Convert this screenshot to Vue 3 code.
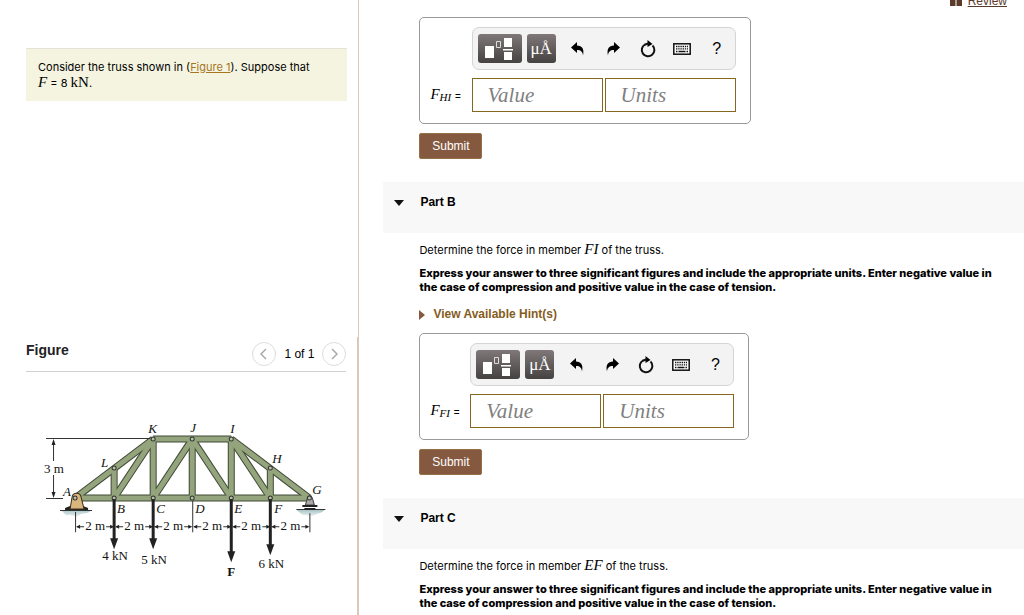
<script setup>
import { reactive } from 'vue'

const instructions =
  'Express your answer to three significant figures and include the appropriate units. Enter negative value in the case of compression and positive value in the case of tension.'

const parts = reactive([
  { id: 'a', member: 'HI', value: '', units: '', answer: true },
  { id: 'b', title: 'Part B', member: 'FI', value: '', units: '', answer: true, hints: true },
  { id: 'c', title: 'Part C', member: 'EF', value: '', units: '', answer: false }
])

// joint positions in the truss drawing
const joints = {
  A: [75, 498], B: [114, 498], C: [153, 498], D: [192, 498], E: [231, 498], F: [270, 498], G: [309, 498],
  L: [114, 468], K: [153, 439], J: [192, 439], I: [231, 439], H: [270, 468]
}
const members = ['LB', 'KC', 'JD', 'IE', 'HF', 'KB', 'JC', 'JE', 'IF', 'AG', 'AK', 'KI', 'IG'].map((m) => {
  const [x1, y1] = joints[m[0]]
  const [x2, y2] = joints[m[1]]
  return { id: m, x1, y1, x2, y2 }
})
const pins = Object.entries(joints).map(([id, [x, y]]) => ({ id, x, y }))
const jointLabels = [
  ['K', 148, 433], ['J', 190, 432], ['I', 230, 433], ['L', 101, 467], ['H', 272, 463], ['A', 63, 496],
  ['G', 312, 494], ['B', 117, 513], ['C', 156, 513], ['D', 195, 513], ['E', 234, 513], ['F', 274, 513]
]
const loads = [
  { x: 114, tip: 549, label: '4 kN', tx: 115, ty: 560 },
  { x: 153, tip: 549, label: '5 kN', tx: 154, ty: 564 },
  { x: 231, tip: 562, label: 'F', tx: 231, ty: 576, bold: true },
  { x: 270, tip: 555, label: '6 kN', tx: 271, ty: 568 }
]
const spans = [75, 114, 153, 192, 231, 270]
</script>

<template>
  <div class="page">
    <aside class="side">
      <section class="problem">
        Consider the truss shown in (<a href="#figure">Figure 1</a>). Suppose that<br />
        <i class="math">F</i> = 8 <span class="math">kN</span>.
      </section>

      <section id="figure" class="figure">
        <header class="figure-head">
          <h2>Figure</h2>
          <nav class="pager">
            <button type="button" aria-label="Previous figure">
              <svg width="12" height="12" viewBox="0 0 12 12"><path d="M8 1 3 6l5 5" /></svg>
            </button>
            <span>1 of 1</span>
            <button type="button" aria-label="Next figure">
              <svg width="12" height="12" viewBox="0 0 12 12"><path d="m4 1 5 5-5 5" /></svg>
            </button>
          </nav>
        </header>

        <svg class="truss" viewBox="26 415 320 170" role="img" aria-label="Truss with loads">
          <defs>
            <linearGradient id="ground" x1="0" y1="0" x2="0" y2="1">
              <stop offset="0" stop-color="#a9c4c6" />
              <stop offset="1" stop-color="#e8f0f0" />
            </linearGradient>
          </defs>

          <path d="M60 510h31c-3 5-8 2-12 5-4 3-7-1-11 0-4 1-3-3-8-5z" fill="url(#ground)" />
          <path d="M296 510h28c-3 4-7 3-10 5-4 2-7-1-10 0-4 0-4-3-8-5z" fill="url(#ground)" />
          <path class="thin" d="M60 510.500h32M296 509.500h29" />

          <g class="outline">
            <line v-for="m in members" :key="m.id" :x1="m.x1" :y1="m.y1" :x2="m.x2" :y2="m.y2" />
          </g>
          <g class="fill">
            <line v-for="m in members" :key="m.id" :x1="m.x1" :y1="m.y1" :x2="m.x2" :y2="m.y2" />
          </g>

          <!-- supports -->
          <path d="M65 510v-2l5-2h13l5 2v2z" fill="#222" />
          <path d="M70 509l2-12c1-5 8-5 9 0l3 12z" fill="#d9b67c" stroke="#3c3020" />
          <path d="M305 505l2-7c1-3 4-3 5 0l2 7z" fill="#aaa" stroke="#444" />
          <path d="M302 506h15M304 509h11" stroke="#222" stroke-width="2" />

          <g class="pin">
            <circle v-for="p in pins" :key="p.id" :cx="p.x" :cy="p.y" r="2" />
          </g>

          <!-- dimensions -->
          <path class="thin" d="M46 438.500h104M46 498.500h17M53.500 442v19M53.500 475v20M75.500 512v20M192.500 501v31M309.500 513v19" />
          <path class="arrow" d="M53.500 439l-2 6h4zM53.500 498l-2-6h4z" />
          <text class="dim" x="54" y="473">3 m</text>
          <g v-for="x in spans" :key="x">
            <path class="thin" :d="`M${x + 2} 526.500h7M${x + 31} 526.500h6`" />
            <path class="arrow" :d="`M${x + 1} 526.500l4-2v4zM${x + 39} 526.500l-4-2v4z`" />
            <text class="dim" :x="x + 20" y="530">2 m</text>
          </g>

          <g v-for="l in loads" :key="l.x">
            <path :d="`M${l.x} 499V${l.tip - 8}`" stroke="#222" stroke-width="3" />
            <path class="arrow" :d="`M${l.x} ${l.tip}l-4-11h8z`" />
            <text class="dim" :class="{ bold: l.bold }" :x="l.tx" :y="l.ty">{{ l.label }}</text>
          </g>
          <text v-for="[name, x, y] in jointLabels" :key="name" class="joint" :x="x" :y="y">{{ name }}</text>
        </svg>
      </section>
    </aside>

    <main class="work">
      <div class="topbar">
        <svg width="12" height="12" viewBox="0 0 12 12"><path d="M0 0h5.500v11H0zM6.500 0H12v11H6.500z" fill="#5b3a2b" /></svg>
        <a href="#review">Review</a>
      </div>

      <section v-for="p in parts" :key="p.id" class="part">
        <header v-if="p.title" class="part-head">
          <button type="button">
            <svg width="10" height="6" viewBox="0 0 10 6"><path d="M0 0h10L5 6z" fill="#111" /></svg>
            {{ p.title }}
          </button>
        </header>

        <div class="part-body">
          <template v-if="p.title">
            <p class="question">Determine the force in member <i class="math">{{ p.member }}</i> of the truss.</p>
            <p class="instructions">{{ instructions }}</p>
          </template>
          <button v-if="p.hints" type="button" class="hints">
            <svg width="6" height="10" viewBox="0 0 6 10"><path d="M0 0v10l6-5z" fill="#855a40" /></svg>
            View Available Hint(s)
          </button>

          <form v-if="p.answer" @submit.prevent>
            <div class="answer">
              <label :for="'value-' + p.id"><i class="math">F<sub>{{ p.member }}</sub></i> =</label>
              <div class="toolbar">
                <button type="button" class="dark wide" aria-label="Templates">
                  <svg width="30" height="24" viewBox="0 0 30 24">
                    <path d="M0 9h9v12H0zM19 1h8v9h-8zM19 15h8v8h-8zM18 12h10v1.500H18z" fill="#fff" />
                    <path d="M11.500 4.500h4v6h-4z" fill="none" stroke="#ddd" />
                  </svg>
                </button>
                <button type="button" class="dark units" aria-label="Symbols">μÅ</button>
                <button type="button" class="tool" aria-label="Undo">
                  <svg width="14" height="14" viewBox="0 0 14 14"><path d="M0 5.500 6 0v3.400c5 .2 7.500 3.200 6 10-.3-3.500-2-5.400-6-5.400v3z" /></svg>
                </button>
                <button type="button" class="tool" aria-label="Redo">
                  <svg width="14" height="14" viewBox="0 0 14 14"><path d="M14 5.500 8 0v3.400c-5 .2-7.500 3.200-6 10 .3-3.500 2-5.400 6-5.400v3z" /></svg>
                </button>
                <button type="button" class="tool" aria-label="Reset">
                  <svg width="16" height="18" viewBox="0 0 16 18">
                    <path d="M5 4.500A6.300 6.300 0 1 0 12.500 5.500" fill="none" stroke="#111" stroke-width="2" />
                    <path d="M7.500 0 12.500 4 7.500 7z" />
                    <path d="M4.500 4.800 9 3.300" stroke="#111" stroke-width="2" />
                  </svg>
                </button>
                <button type="button" class="tool" aria-label="Keyboard">
                  <svg width="18" height="12" viewBox="0 0 18 12">
                    <rect x=".8" y=".8" width="16.400" height="10.400" fill="#fff" stroke="#111" stroke-width="1.500" />
                    <path d="M3 3.500h12M3 5.800h12" stroke="#111" stroke-width="1.300" stroke-dasharray="1.400 .8" />
                    <path d="M3 8.500h1.500M5.500 8.500h7M13.500 8.500H15" stroke="#111" stroke-width="1.300" />
                  </svg>
                </button>
                <button type="button" class="tool help" aria-label="Help">?</button>
              </div>
              <div class="fields">
                <input :id="'value-' + p.id" v-model="p.value" type="text" placeholder="Value" />
                <input v-model="p.units" type="text" placeholder="Units" aria-label="Units" />
              </div>
            </div>
            <button class="submit">Submit</button>
          </form>
        </div>
      </section>
    </main>
  </div>
</template>

<style>
body { background: #fff; }
</style>

<style scoped>
.page {
  display: grid;
  grid-template-columns: 35.1% 1fr;
  height: 100vh;
  overflow: hidden;
  font: 11px/15px Inter, "Liberation Sans", Arial, sans-serif;
  color: #000;
}
* { box-sizing: border-box; }
button {
  font: 12px/15px "Liberation Sans", Arial, sans-serif;
  color: inherit;
  border: 0;
  padding: 0;
  background: none;
  cursor: pointer;
}
.math {
  font-family: "Liberation Serif", "Times New Roman", serif;
  font-size: 15px;
  line-height: 14px;
}

/* left column */
.side {
  display: flex;
  flex-direction: column;
  justify-content: space-between;
  border-right: 1px solid #d9c8bc;
}
.problem {
  margin: 48px 11px 0 26px;
  padding: 11px 12px 10px;
  border-top: 1px solid #e3e4d8;
  background: #f5f4e1;
}
.problem a { color: #a6761d; }
.figure {
  padding: 5px 11px 30px 26px;
  border-right: 1px solid #d9c8bc;
}
.figure-head {
  display: flex;
  justify-content: space-between;
  height: 30px;
  border-bottom: 1px solid #d0d0d0;
}
.figure-head h2 {
  margin: 0;
  font: bold 14px/17px "Liberation Sans", Arial, sans-serif;
  color: #222;
}
.pager {
  display: flex;
  align-items: center;
  gap: 8px;
  height: 24px;
  font: 12px/15px "Liberation Sans", Arial, sans-serif;
}
.pager span { padding-top: 2px; }
.pager button {
  display: grid;
  place-items: center;
  width: 24px;
  height: 24px;
  border: 1px solid #ddd;
  border-radius: 50%;
}
.pager path {
  fill: none;
  stroke: #aaa;
  stroke-width: 1.5;
}
.truss {
  display: block;
  width: 100%;
  margin-top: 43px;
}
.outline line { stroke: #3f4a35; stroke-width: 7; }
.fill line { stroke: #94a47c; stroke-width: 5; }
.pin circle { fill: #b9c0a8; stroke: #333; }
.thin { stroke: #333; fill: none; }
.arrow { fill: #222; }
.dim, .joint {
  font-family: "Liberation Serif", "Times New Roman", serif;
  font-size: 13px;
  fill: #111;
}
.dim { text-anchor: middle; }
.joint { font-style: italic; }
.bold { font-weight: bold; }

/* right column */
.work {
  min-width: 0;
  padding-left: 24px;
}
.topbar {
  display: flex;
  justify-content: flex-end;
  align-items: flex-end;
  gap: 6px;
  height: 9px;
  margin-bottom: 8px;
  padding-right: 17px;
  font: 12px/15px "Liberation Sans", Arial, sans-serif;
}
.topbar svg { margin-bottom: 2px; }
.topbar a { color: #5b3a2b; }
.part-head {
  height: 51px;
  padding: 13px 11px;
  background: #f8f8f8;
}
.part-head button {
  display: flex;
  align-items: center;
  gap: 16px;
  font-weight: bold;
}
.part-body { padding: 0 16px 0 36px; }
.question { margin: 9px 0 8px; }
.instructions {
  margin: 0;
  font-weight: 800;
  line-height: 14px;
}
.hints {
  display: flex;
  align-items: center;
  gap: 8px;
  margin: 13px 0 11px;
  color: #855c1c;
  font-weight: bold;
}
.answer {
  display: grid;
  grid-template-columns: auto auto;
  align-items: center;
  gap: 8px 10px;
  width: fit-content;
  padding: 9px 14px 11px 10px;
  border: 1px solid #999;
  border-radius: 5px;
}
.answer label { grid-row: 2; white-space: nowrap; }
.answer sub { font-size: 11px; line-height: 0; vertical-align: -2px; }
.toolbar {
  grid-column: 2;
  display: flex;
  align-items: center;
  gap: 5px;
  height: 43px;
  padding: 0 3px 0 5px;
  border: 1px solid #d4d4d4;
  border-radius: 7px;
  background: #f3f3f3;
}
.dark {
  display: grid;
  place-items: center;
  height: 29px;
  border-radius: 3px;
  background: linear-gradient(#807878, #454242);
  color: #fff;
}
.wide { width: 44px; }
.units {
  width: 29px;
  font: 17px/20px "Liberation Serif", "Times New Roman", serif;
}
.tool {
  display: grid;
  place-items: center;
  flex: 1;
  height: 29px;
}
.units + .tool { margin-left: 3px; }
.help { font-size: 16px; }
.fields {
  grid-column: 2;
  display: flex;
  gap: 2px;
}
.fields input {
  width: 131px;
  height: 34px;
  padding: 0 15px;
  border: 1px solid #86671f;
  font: italic 21px/24px "Liberation Serif", "Times New Roman", serif;
}
.fields input::placeholder { color: #808080; opacity: 1; }
.submit {
  display: block;
  width: 63px;
  height: 26px;
  margin: 9px 0 23px;
  border: 1px solid #93704a;
  border-radius: 2px;
  background: #84593f;
  color: #fff;
}
</style>
